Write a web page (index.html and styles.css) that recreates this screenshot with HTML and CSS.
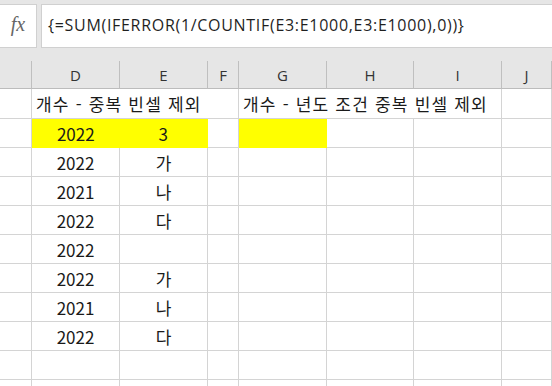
FILE: index.html
```html
<!DOCTYPE html>
<html lang="ko">
<head>
<meta charset="UTF-8">
<title>Sheet</title>
<link rel="stylesheet" href="styles.css">
</head>
<body>

<div class="formula-bar">
  <div class="fx">fx</div>
  <div class="formula">{=SUM(IFERROR(1/COUNTIF(E3:E1000,E3:E1000),0))}</div>
</div>

<div class="sheet">
  <div class="row head">
    <div class="cell"></div>
    <div class="cell">D</div>
    <div class="cell">E</div>
    <div class="cell">F</div>
    <div class="cell">G</div>
    <div class="cell">H</div>
    <div class="cell">I</div>
    <div class="cell">J</div>
  </div>

  <div class="row tall">
    <div class="cell"></div>
    <div class="cell label span-3">개수 - 중복 빈셀 제외</div>
    <div class="cell label span-3">개수 - 년도 조건 중복 빈셀 제외</div>
    <div class="cell"></div>
  </div>

  <div class="row">
    <div class="cell"></div>
    <div class="cell hl span-2"><span>2022</span><span>3</span></div>
    <div class="cell"></div>
    <div class="cell hl"></div>
    <div class="cell"></div>
    <div class="cell"></div>
    <div class="cell"></div>
  </div>

  <div class="row">
    <div class="cell"></div><div class="cell">2022</div><div class="cell">가</div>
    <div class="cell"></div><div class="cell"></div><div class="cell"></div><div class="cell"></div><div class="cell"></div>
  </div>
  <div class="row">
    <div class="cell"></div><div class="cell">2021</div><div class="cell">나</div>
    <div class="cell"></div><div class="cell"></div><div class="cell"></div><div class="cell"></div><div class="cell"></div>
  </div>
  <div class="row">
    <div class="cell"></div><div class="cell">2022</div><div class="cell">다</div>
    <div class="cell"></div><div class="cell"></div><div class="cell"></div><div class="cell"></div><div class="cell"></div>
  </div>
  <div class="row">
    <div class="cell"></div><div class="cell">2022</div><div class="cell"></div>
    <div class="cell"></div><div class="cell"></div><div class="cell"></div><div class="cell"></div><div class="cell"></div>
  </div>
  <div class="row">
    <div class="cell"></div><div class="cell">2022</div><div class="cell">가</div>
    <div class="cell"></div><div class="cell"></div><div class="cell"></div><div class="cell"></div><div class="cell"></div>
  </div>
  <div class="row">
    <div class="cell"></div><div class="cell">2021</div><div class="cell">나</div>
    <div class="cell"></div><div class="cell"></div><div class="cell"></div><div class="cell"></div><div class="cell"></div>
  </div>
  <div class="row">
    <div class="cell"></div><div class="cell">2022</div><div class="cell">다</div>
    <div class="cell"></div><div class="cell"></div><div class="cell"></div><div class="cell"></div><div class="cell"></div>
  </div>
  <div class="row">
    <div class="cell"></div><div class="cell"></div><div class="cell"></div>
    <div class="cell"></div><div class="cell"></div><div class="cell"></div><div class="cell"></div><div class="cell"></div>
  </div>
  <div class="row">
    <div class="cell"></div><div class="cell"></div><div class="cell"></div>
    <div class="cell"></div><div class="cell"></div><div class="cell"></div><div class="cell"></div><div class="cell"></div>
  </div>
</div>

</body>
</html>
```

FILE: styles.css
```css
* { box-sizing: border-box; }

body {
  margin: 0;
  height: 386px;
  overflow: hidden;
  background: #e6e6e6;
  font-family: "Noto Sans CJK KR", "Noto Sans", sans-serif;
  color: #1a1a1a;
}

.formula-bar {
  display: flex;
  gap: 4px;
  height: 48px;
  padding-top: 4px;
}

.fx {
  width: 37px;
  background: #fff;
  border: 1px solid #d0d0d0;
  border-left: none;
  display: flex;
  align-items: center;
  justify-content: center;
  font-family: "Liberation Serif", serif;
  font-style: italic;
  font-size: 20px;
  color: #666;
  padding-bottom: 3px;
}

.formula {
  flex: 1;
  background: #fff;
  border: 1px solid #d0d0d0;
  border-right: none;
  display: flex;
  align-items: center;
  padding-left: 6px;
  padding-bottom: 2px;
  font-family: "Open Sans", sans-serif;
  font-size: 16px;
  letter-spacing: 0.7px;
  color: #1f1f1f;
}

.sheet {
  margin-top: 13px;
  height: 325px;
  overflow: hidden;
}

.row {
  display: grid;
  grid-template-columns: 32px 88px 88px 31px 88px 87px 88px 1fr;
  height: 29px;
  background: #fff;
}

.row.tall { height: 30px; }

.cell {
  border-right: 1px solid #d4d4d4;
  border-bottom: 1px solid #d4d4d4;
  display: flex;
  align-items: center;
  justify-content: center;
  font-size: 17px;
  white-space: nowrap;
}

.head {
  height: 28px;
  background: #e6e6e6;
}

.head .cell {
  border-right-color: #bfbfbf;
  border-bottom-color: #bcbcbc;
  font-family: "Open Sans", sans-serif;
  font-size: 15px;
  color: #333;
}

.span-2 { grid-column: span 2; }
.span-3 { grid-column: span 3; }

.label {
  justify-content: flex-start;
  padding-left: 4px;
  letter-spacing: 1.2px;
}

.hl {
  background: #ffff00;
  border-right: 1px solid #ffff00;
  border-bottom: 1px solid #ffff00;
}

.hl.span-2 span { flex: 1; text-align: center; }
```
